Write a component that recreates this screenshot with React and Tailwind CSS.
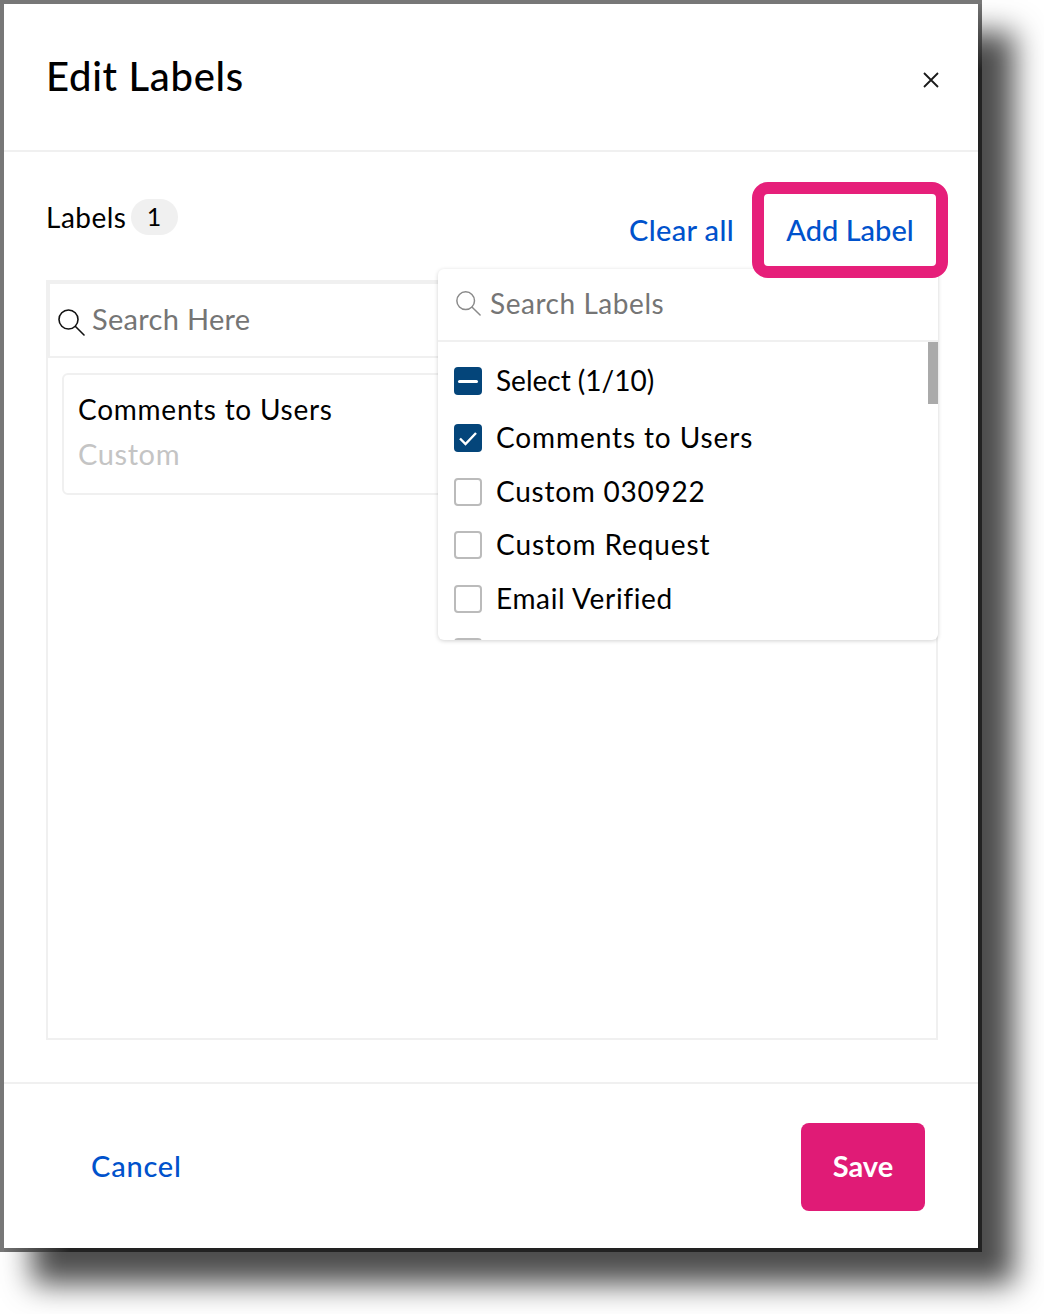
import React from "react";

const SearchIcon = ({ className }) => (
  <svg viewBox="0 0 28 28" fill="none" stroke="currentColor" strokeWidth="1.6" className={className}>
    <circle cx="11.5" cy="11.5" r="9.5" />
    <path d="M18.5 18.5 L27 27" strokeLinecap="round" />
  </svg>
);

const Box = ({ state }) => {
  if (state === "mixed") {
    return (
      <span className="w-7 h-7 shrink-0 rounded-[4px] bg-[#04457a] flex items-center justify-center">
        <span className="w-[20px] h-[3px] bg-white rounded-full" />
      </span>
    );
  }
  if (state === "checked") {
    return (
      <span className="w-7 h-7 shrink-0 rounded-[4px] bg-[#04457a] flex items-center justify-center">
        <svg viewBox="0 0 20 16" fill="none" stroke="white" strokeWidth="2.4" className="w-[20px] h-[16px]">
          <path d="M2 8.5 L7.5 14 L18 3" />
        </svg>
      </span>
    );
  }
  return <span className="w-7 h-7 shrink-0 rounded-[4px] border-2 border-[#bbbbbb] bg-white" />;
};

const Row = ({ state, label, className, textClass }) => (
  <div className={`flex items-center gap-[14px] h-[28px] text-[28px] text-black leading-none ${className}`}>
    <Box state={state} />
    <span className={`-translate-y-px ${textClass}`}>{label}</span>
  </div>
);

export default function App() {
  return (
    <div className="w-[1044px] h-[1314px] overflow-hidden bg-white font-['Lato',sans-serif]">
      <div className="w-[982px] h-[1252px] p-[4px] shadow-[32px_32px_28px_rgba(0,0,0,0.7)] [background:linear-gradient(#777,#777)_top/100%_4px_no-repeat,linear-gradient(#777,#777)_left/4px_100%_no-repeat,linear-gradient(#777,#222_70px)_right/4px_100%_no-repeat,linear-gradient(90deg,#777,#222_70px)_bottom/100%_4px_no-repeat]">
        <div className="h-full bg-white rounded-[4px] flex flex-col">
          <header className="h-[148px] shrink-0 border-b-2 border-[#f0f0f0] flex items-center justify-between pl-[42px] pr-[39px]">
            <h1 className="text-[40px] leading-none font-medium text-black tracking-[0.7px] -translate-y-px">Edit Labels</h1>
            <svg viewBox="0 0 16 16" fill="none" stroke="#1a1a1a" strokeWidth="1.8" className="w-4 h-4 mt-[6px]">
              <path d="M1 1 L15 15 M15 1 L1 15" />
            </svg>
          </header>

          <section className="flex-1 pl-[42px] pr-[40px] flex flex-col">
            <div className="h-[128px] shrink-0 flex justify-between">
              <div className="flex items-center h-[36px] mt-[47px] gap-[4px]">
                <span className="text-[28px] text-black tracking-[0.5px]">Labels</span>
                <span className="w-[47px] h-[36px] rounded-full bg-[#f0f0f0] text-[25px] text-black flex items-center justify-center">1</span>
              </div>
              <div className="flex items-center gap-[18px] h-[96px] mt-[30px] -mr-[10px] relative z-10">
                <a className="text-[29px] text-[#0052cc] font-medium tracking-[0.35px]">Clear all</a>
                <a className="w-[196px] h-[96px] border-[12px] border-[#e61f7a] rounded-[16px] bg-white text-[29px] text-[#0052cc] font-medium flex items-center justify-center">
                  Add Label
                </a>
              </div>
            </div>

            <div className="relative h-[760px] border-2 border-[#f0f0f0] flex flex-col">
              <div className="h-[76px] border-l-2 border-t-2 border-b-2 border-[#f0f0f0] flex items-center pl-[7px] gap-[7px] text-[#757575]">
                <SearchIcon className="w-7 h-7 text-[#111] mt-[4px]" />
                <span className="text-[29px] tracking-[0.3px] -translate-y-px">Search Here</span>
              </div>
              <div className="mt-[15px] ml-[14px] mr-[14px] h-[122px] border-2 border-[#f0f0f0] rounded-[6px] pl-[14px] pt-[17px]">
                <div className="text-[28px] leading-[34px] text-black tracking-[0.75px]">Comments to Users</div>
                <div className="text-[29px] leading-[34px] mt-[11px] text-[#c4c4c4] tracking-[0.6px]">Custom</div>
              </div>

              <div className="absolute -top-[13px] -right-[2px] w-[500px] h-[371px] bg-white rounded-[6px] shadow-[0_1px_4px_rgba(0,0,0,0.18)] overflow-hidden flex flex-col">
                <div className="h-[73px] shrink-0 border-b-2 border-[#f0f0f0] flex items-center pl-[17px] gap-[9px] text-[#757575]">
                  <SearchIcon className="w-[26px] h-[26px] text-[#8a8a8a] -mt-[3px]" />
                  <span className="text-[28px] tracking-[0.55px] -translate-y-[2px]">Search Labels</span>
                </div>
                <div className="relative flex-1 overflow-hidden pl-[16px] pt-[25px]">
                  <Row state="mixed" label="Select (1/10)" />
                  <Row state="checked" label="Comments to Users" className="mt-[29px]" textClass="tracking-[0.9px]" />
                  <Row label="Custom 030922" className="mt-[26px]" textClass="tracking-[0.75px]" />
                  <Row label="Custom Request" className="mt-[25px]" textClass="tracking-[0.9px]" />
                  <Row label="Email Verified" className="mt-[26px]" textClass="tracking-[0.65px]" />
                  <Row label="" className="mt-[25px]" />
                  <div className="absolute top-0 right-0 w-[10px] h-[62px] bg-[#aaaaaa]" />
                </div>
              </div>
            </div>
          </section>

          <footer className="h-[166px] shrink-0 border-t-2 border-[#f0f0f0] mt-[42px] flex items-center justify-between pl-[87px] pr-[53px]">
            <a className="text-[29px] text-[#0052cc] font-medium tracking-[0.8px]">Cancel</a>
            <button className="w-[124px] h-[88px] mt-[2px] pb-[2px] rounded-[8px] bg-[#e01b76] text-white text-[29px] font-bold">Save</button>
          </footer>
        </div>
      </div>
    </div>
  );
}
